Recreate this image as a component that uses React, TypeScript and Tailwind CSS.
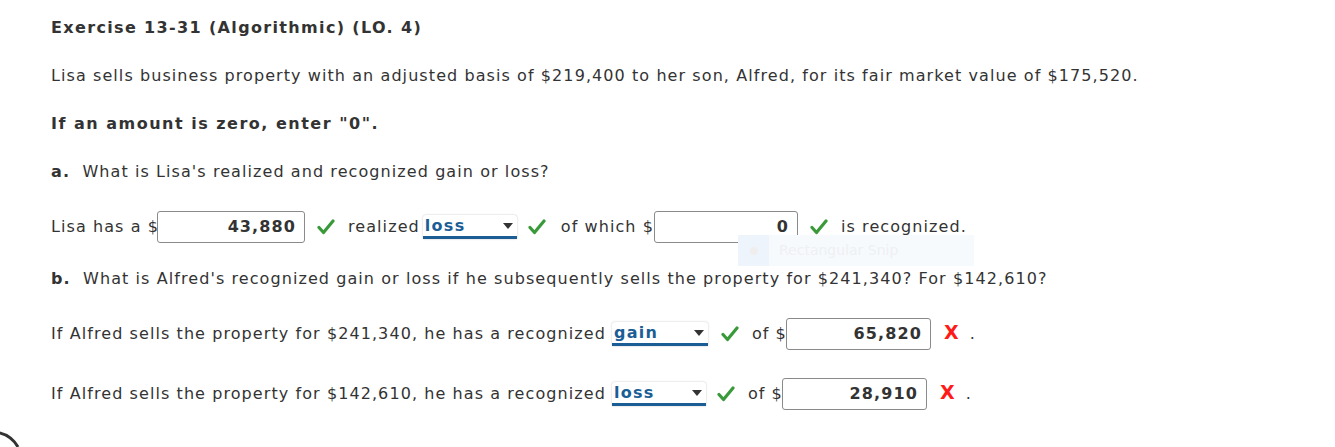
import React from "react";

function Check() {
  return (
    <svg width="18" height="18" viewBox="0 0 18 18" className="shrink-0">
      <path d="M2 9.5 L6.5 14.5 L16 3" fill="none" stroke="#3a9a3a" strokeWidth="3.2" strokeLinecap="round" strokeLinejoin="round" />
    </svg>
  );
}

function Cross() {
  return (
    <span className="text-[19px] font-bold leading-none text-[#ff1a1a]">X</span>
  );
}

function Amount({ value, w }: { value: string; w: string }) {
  return (
    <span
      className={`inline-flex h-[32px] ${w} items-center justify-end rounded-[3px] border border-[#8a8a8a] bg-white px-[8px] font-bold tracking-[1.1px] text-[#333]`}
    >
      {value}
    </span>
  );
}

function Pick({ value, w }: { value: string; w: string }) {
  return (
    <span
      className={`relative inline-flex h-[24px] ${w} items-end rounded-t-[3px] bg-white pl-[2px] font-bold tracking-[1.3px] text-[#1b5e96] shadow-[0_0_2px_rgba(0,0,0,0.25)] border-b-[3px] border-[#1b5e96] leading-[20px]`}
    >
      {value}
      <svg width="10" height="6" viewBox="0 0 10 6" className="absolute right-[4px] top-[8px]">
        <path d="M0 0 L10 0 L5 6 Z" fill="#333" />
      </svg>
    </span>
  );
}

export default function App() {
  return (
    <div
      className="relative h-[447px] w-[1335px] overflow-hidden bg-white text-[16px] tracking-[1.08px] text-[#333]"
      style={{ fontFamily: '"DejaVu Sans", Verdana, sans-serif' }}
    >
      <div className="px-[51px] pt-[16px]">
        <h1 className="text-[16px] font-bold tracking-[1.35px] leading-[24px]">Exercise 13-31 (Algorithmic) (LO. 4)</h1>
        <p className="mt-[24px] leading-[24px]">
          Lisa sells business property with an adjusted basis of $219,400 to her son, Alfred, for its fair market value of $175,520.
        </p>
        <p className="mt-[24px] font-bold tracking-[1.5px] leading-[24px]">If an amount is zero, enter "0".</p>
        <p className="mt-[24px] leading-[24px]">
          <span className="font-bold">a.</span>&nbsp; What is Lisa's realized and recognized gain or loss?
        </p>
        <div className="mt-[27px] flex h-[32px] items-center">
          <span className="-mr-[2px]">Lisa has a $</span>
          <Amount value="43,880" w="w-[148px]" />
          <span className="ml-[12px]"><Check /></span>
          <span className="ml-[13px] mr-[3px]">realized</span>
          <Pick value="loss" w="w-[94px]" />
          <span className="ml-[11px]"><Check /></span>
          <span className="ml-[15px]">of which $</span>
          <Amount value="0" w="w-[144px]" />
          <span className="ml-[12px]"><Check /></span>
          <span className="ml-[13px]">is recognized.</span>
        </div>
        <p className="mt-[24px] leading-[24px]">
          <span className="font-bold">b.</span>&nbsp; What is Alfred's recognized gain or loss if he subsequently sells the property for $241,340? For $142,610?
        </p>
        <div className="mt-[27px] flex h-[32px] items-center">
          <span className="mr-[6px]">If Alfred sells the property for $241,340, he has a recognized</span>
          <Pick value="gain" w="w-[96px]" />
          <span className="ml-[13px]"><Check /></span>
          <span className="ml-[13px] -mr-[1px]">of $</span>
          <Amount value="65,820" w="w-[145px]" />
          <span className="ml-[13px]"><Cross /></span>
          <span className="ml-[10px]">.</span>
        </div>
        <div className="mt-[28px] flex h-[32px] items-center">
          <span className="mr-[6px]">If Alfred sells the property for $142,610, he has a recognized</span>
          <Pick value="loss" w="w-[94px]" />
          <span className="ml-[11px]"><Check /></span>
          <span className="ml-[13px] -mr-[1px]">of $</span>
          <Amount value="28,910" w="w-[145px]" />
          <span className="ml-[13px]"><Cross /></span>
          <span className="ml-[10px]">.</span>
        </div>
      </div>

      <div className="pointer-events-none absolute left-[738px] top-[235px] flex h-[31px] w-[236px] items-center bg-[#f7fafd]">
        <span className="flex h-full w-[31px] items-center justify-center bg-[#eef4fb]">
          <span className="h-[8px] w-[8px] rounded-full bg-[#f0eded]" />
        </span>
        <span className="ml-[10px] text-[14px] tracking-normal text-[#eef0f3]">Rectangular Snip</span>
      </div>

      <svg className="absolute left-0 top-[420px]" width="40" height="27" viewBox="0 0 40 27">
        <path d="M-6 12 A 30 30 0 0 1 18 27" fill="none" stroke="#333" strokeWidth="3" />
      </svg>
    </div>
  );
}
